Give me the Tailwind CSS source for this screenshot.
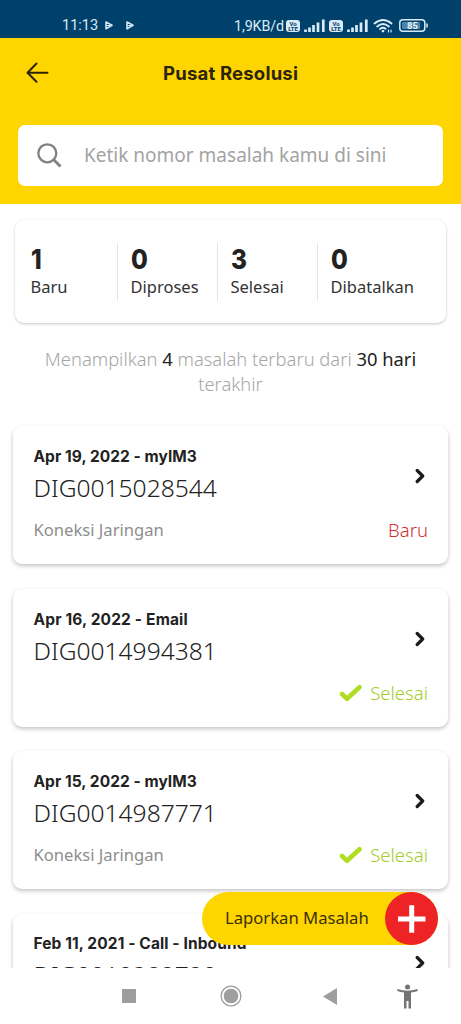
<!DOCTYPE html>
<html lang="id">
<head>
<meta charset="utf-8">
<title>Pusat Resolusi</title>
<script src="https://cdn.jsdelivr.net/npm/@tailwindcss/browser@4"></script>
</head>
<body class="bg-white">
<svg class="hidden">
  <symbol id="chevron" viewBox="0 0 12 18"><path d="M2.200 3.500l5.500 5.500-5.500 5.500" fill="none" stroke="#1c1c1c" stroke-width="3.200" stroke-linecap="round" stroke-linejoin="round"/></symbol>
  <symbol id="check" viewBox="0 0 24 18"><path d="M4 10l5 4.800L21.500 3.200" fill="none" stroke="#afdd22" stroke-width="4.600" stroke-linecap="round" stroke-linejoin="round"/></symbol>
  <symbol id="play" viewBox="0 0 8 9"><path d="M1 1l6 3.300L1 7.800z" fill="none" stroke="#cfe6f5" stroke-width="1.600" stroke-linejoin="round"/><path d="M1 4.500h4" stroke="#cfe6f5"/></symbol>
  <symbol id="signal" viewBox="0 0 21 13"><path d="M1.500 10.500v2.500M5.500 8.500V13M9.500 6v7M14 3.500V13M19.300 .5V13" stroke="#d9ebf6" stroke-width="2.700"/></symbol>
</svg>
<div class="flex h-[1024px] w-[461px] flex-col overflow-hidden bg-white font-['Noto_Sans',sans-serif] text-[#222]">
  <div class="flex h-[38px] shrink-0 items-start bg-[#00416b] pt-[16px] pl-[62px] font-['Roboto',sans-serif] text-[14.500px] leading-[20px] text-[#d9ebf6]">
    <span class="w-[43px]">11:13</span>
    <svg class="mt-[5px] h-[9px] w-[8px]"><use href="#play"/></svg>
    <svg class="mt-[5px] ml-[13px] h-[9px] w-[8px]"><use href="#play"/></svg>
    <span class="ml-[100px] w-[52px] text-[14.300px] tracking-[-0.1px] whitespace-nowrap">1,9KB/d</span>
    <span class="mt-[4px] flex h-[12px] w-[14px] flex-col items-center rounded-[3px] bg-[#d9ebf6] pt-[1px] text-[6px] leading-[5px] font-bold text-[#00416b]"><span>Vo</span><span>LTE</span></span>
    <svg class="mt-[3px] ml-[4px] h-[13px] w-[21px]"><use href="#signal"/></svg>
    <span class="mt-[4px] ml-[4px] flex h-[12px] w-[14px] flex-col items-center rounded-[3px] bg-[#d9ebf6] pt-[1px] text-[6px] leading-[5px] font-bold text-[#00416b]"><span>Vo</span><span>LTE</span></span>
    <svg class="mt-[3px] ml-[4px] h-[13px] w-[21px]"><use href="#signal"/></svg>
    <svg class="mt-[2px] ml-[5px] h-[15px] w-[20px]" viewBox="0 0 20 15" fill="none" stroke="#d9ebf6" stroke-width="1.900" stroke-linecap="round"><path d="M1.500 5.500Q10-1.500 18.500 5.500M4.200 8.500Q10 3.700 15.800 8.500M7 11Q10 8.800 12.500 10.800"/><path d="M9 13l1 .5 1-.5z"/><path d="M15.500 12v2M18 12v2" stroke-width="1.200"/></svg>
    <svg class="mt-[3px] ml-[6px] h-[13px] w-[29px]" viewBox="0 0 29 13"><rect x=".8" y=".8" width="25" height="11.400" rx="3" fill="none" stroke="#d9ebf6" stroke-width="1.500"/><rect x="3" y="3" width="18" height="7" rx="1" fill="#4d83a6"/><path d="M28 4.500v4" stroke="#d9ebf6" stroke-width="1.500"/><text x="13.500" y="9.800" text-anchor="middle" font-family="Roboto" font-size="9.500" font-weight="700" fill="#e9f5fc">85</text></svg>
  </div>

  <header class="h-[166px] shrink-0 bg-[#ffd500] px-[18px]">
    <div class="flex h-[87px] items-start pt-[22px] pl-[8px]">
      <svg class="mt-[2px] h-[22px] w-[24px]" viewBox="0 0 24 22" fill="none" stroke="#2b2408" stroke-width="2" stroke-linecap="round" stroke-linejoin="round"><path d="M21.500 10.700H1.500M10.500 1.500L1.500 10.700l9 9"/></svg>
      <h1 class="ml-[113px] font-['Inter',sans-serif] text-[18.500px] leading-[26px] font-bold tracking-[0.2px] whitespace-nowrap text-[#2b2408]">Pusat Resolusi</h1>
    </div>
    <div class="flex h-[61px] w-[425px] items-center rounded-[7px] bg-white pl-[19px]">
      <svg class="h-[25px] w-[25px]" viewBox="0 0 25 25" fill="none" stroke="#808080" stroke-width="2.300"><circle cx="10.300" cy="10.300" r="9"/><path d="M16.500 16.500l7 7" stroke-width="2.800"/></svg>
      <span class="ml-[22px] text-[19px] font-normal whitespace-nowrap text-[#a3a3a3]">Ketik nomor masalah kamu di sini</span>
    </div>
  </header>

  <main class="relative h-[764px] shrink-0 overflow-hidden">
    <section class="mt-[16px] ml-[15px] flex h-[103px] w-[431px] rounded-[9px] bg-white pt-[23px] pl-[1px] shadow-[0_1px_3px_rgba(0,0,0,0.22)]">
      <div class="h-[58px] w-[101px] pl-[14.500px]"><div class="h-[33px] font-['Inter',sans-serif] text-[27px] leading-[34px] font-extrabold"><span class="inline-block origin-left scale-x-90">1</span></div><div class="text-[16.500px] leading-[22px] text-[#333]">Baru</div></div>
      <div class="h-[58px] w-[100px] border-l border-[#e4e4e4] pl-[12.500px]"><div class="h-[33px] font-['Inter',sans-serif] text-[27px] leading-[34px] font-extrabold"><span class="inline-block origin-left scale-x-90">0</span></div><div class="text-[16.500px] leading-[22px] text-[#333]">Diproses</div></div>
      <div class="h-[58px] w-[100px] border-l border-[#e4e4e4] pl-[12.500px]"><div class="h-[33px] font-['Inter',sans-serif] text-[27px] leading-[34px] font-extrabold"><span class="inline-block origin-left scale-x-90">3</span></div><div class="text-[16.500px] leading-[22px] text-[#333]">Selesai</div></div>
      <div class="h-[58px] w-[100px] border-l border-[#e4e4e4] pl-[12.500px]"><div class="h-[33px] font-['Inter',sans-serif] text-[27px] leading-[34px] font-extrabold"><span class="inline-block origin-left scale-x-90">0</span></div><div class="text-[16.500px] leading-[22px] text-[#333]">Dibatalkan</div></div>
    </section>
    <p class="mt-[23px] text-center text-[18.350px] leading-[25px] font-light whitespace-nowrap text-[#a6a6a6]">Menampilkan <span class="font-normal text-[#222]">4</span> masalah terbaru dari <span class="font-normal text-[#222]">30 hari</span><br>terakhir</p>

    <div class="mt-[30px] ml-[13px] flex w-[435px] flex-col gap-[24.500px]">
      <article class="flex h-[138px] shrink-0 justify-between rounded-[9px] bg-white pt-[20px] pr-[20px] pl-[20.500px] shadow-[0_2px_4px_rgba(0,0,0,0.24)]">
        <div class="whitespace-nowrap"><h2 class="font-['Inter',sans-serif] text-[15.500px] leading-[22px] font-bold tracking-[0.05px]">Apr 19, 2022 - myIM3</h2><div class="text-[24.600px] leading-[40px] font-light">DIG0015028544</div><div class="mt-[10px] text-[16.600px] leading-[24px] font-normal text-[#8e8e8e]">Koneksi Jaringan</div></div>
        <div class="flex flex-col items-end pt-[21px]"><svg class="mr-px h-[18px] w-[12px]"><use href="#chevron"/></svg><div class="mt-[32px] text-[18.500px] leading-[26px] font-light text-[#cf2f36]">Baru</div></div>
      </article>
      <article class="flex h-[138px] shrink-0 justify-between rounded-[9px] bg-white pt-[20px] pr-[20px] pl-[20.500px] shadow-[0_2px_4px_rgba(0,0,0,0.24)]">
        <div class="whitespace-nowrap"><h2 class="font-['Inter',sans-serif] text-[15.500px] leading-[22px] font-bold tracking-[0.15px]">Apr 16, 2022 - Email</h2><div class="text-[24.600px] leading-[40px] font-light">DIG0014994381</div></div>
        <div class="flex flex-col items-end pt-[21px]"><svg class="mr-px h-[18px] w-[12px]"><use href="#chevron"/></svg><div class="mt-[32px] flex items-center text-[18.500px] leading-[26px] font-light text-[#a5cc2c]"><svg class="mr-[8px] h-[18px] w-[24px]"><use href="#check"/></svg>Selesai</div></div>
      </article>
      <article class="flex h-[138px] shrink-0 justify-between rounded-[9px] bg-white pt-[20px] pr-[20px] pl-[20.500px] shadow-[0_2px_4px_rgba(0,0,0,0.24)]">
        <div class="whitespace-nowrap"><h2 class="font-['Inter',sans-serif] text-[15.500px] leading-[22px] font-bold tracking-[0.05px]">Apr 15, 2022 - myIM3</h2><div class="text-[24.600px] leading-[40px] font-light">DIG0014987771</div><div class="mt-[10px] text-[16.600px] leading-[24px] font-normal text-[#8e8e8e]">Koneksi Jaringan</div></div>
        <div class="flex flex-col items-end pt-[21px]"><svg class="mr-px h-[18px] w-[12px]"><use href="#chevron"/></svg><div class="mt-[32px] flex items-center text-[18.500px] leading-[26px] font-light text-[#a5cc2c]"><svg class="mr-[8px] h-[18px] w-[24px]"><use href="#check"/></svg>Selesai</div></div>
      </article>
      <article class="flex h-[138px] shrink-0 justify-between rounded-[9px] bg-white pt-[19.500px] pr-[20px] pl-[20.500px] shadow-[0_2px_4px_rgba(0,0,0,0.24)]">
        <div class="whitespace-nowrap"><h2 class="font-['Inter',sans-serif] text-[15.500px] leading-[22px] font-bold tracking-[0.1px]">Feb 11, 2021 - Call - Inbound</h2><div class="text-[24.600px] leading-[40px] font-light">DIG0010282720</div></div>
        <div class="flex flex-col items-end pt-[21px]"><svg class="mr-px h-[18px] w-[12px]"><use href="#chevron"/></svg></div>
      </article>
    </div>

    <button class="absolute top-[688px] left-[202px] flex h-[53px] w-[236px] items-center justify-between rounded-full bg-[#ffd500] pl-[23px] text-[16.650px] whitespace-nowrap text-[#3a3005]">
      <span>Laporkan Masalah</span>
      <svg class="h-[53px] w-[53px]" viewBox="0 0 53 53"><circle cx="26.500" cy="26.500" r="26.500" fill="#ee2326"/><path d="M13 27h27.500M26.700 13.300v27.500" stroke="#fff" stroke-width="5"/></svg>
    </button>
  </main>

  <nav class="flex h-[56px] shrink-0 items-start bg-white">
    <svg class="mt-[21px] ml-[122px] h-[14px] w-[14px]" viewBox="0 0 14 14"><rect width="14" height="14" fill="#9e9e9e"/></svg>
    <svg class="mt-[17px] ml-[84px] h-[22px] w-[22px]" viewBox="0 0 22 22"><circle cx="11" cy="11" r="9.900" fill="none" stroke="#9a9a9a" stroke-width="1.300"/><circle cx="11" cy="11" r="7.300" fill="#9e9e9e"/></svg>
    <svg class="mt-[20px] ml-[81px] h-[17px] w-[14px]" viewBox="0 0 14 17"><path d="M14 0v17L0 8.500z" fill="#9e9e9e"/></svg>
    <svg class="mt-[16px] ml-[60px] h-[25px] w-[21px]" viewBox="0 0 21 25" fill="#747474"><circle cx="10.500" cy="3" r="2.500"/><path d="M.3 4.900Q10.500 8.500 20.700 4.900v2.200Q17 8.300 14 8.400V24.500h-2.500V17h-2v7.500H7V8.400Q4 8.300.3 7.100z"/></svg>
  </nav>
</div>
</body>
</html>
